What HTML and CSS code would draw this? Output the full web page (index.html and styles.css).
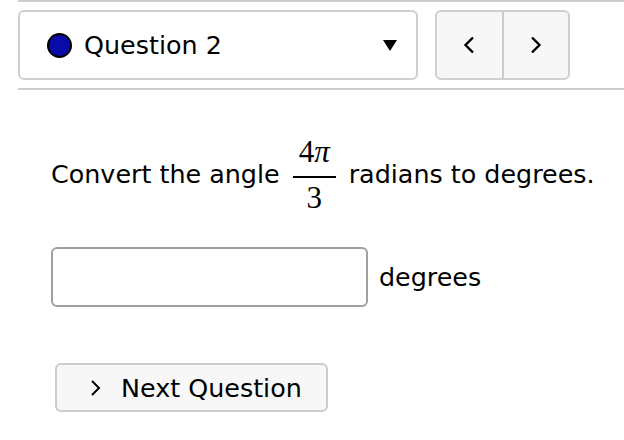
FILE: index.html
```html
<!DOCTYPE html>
<html>
<head>
    <title>Question 2</title>
    <link rel="stylesheet" href="styles.css">
</head>
<body>
    <div class="toolbar">
        <div class="picker">
            <span class="dot"></span>
            <span class="picker-label">Question 2</span>
            <span class="caret"></span>
        </div>
        <div class="nav">
            <button class="nav-btn" aria-label="Previous">
                <svg width="12" height="18" viewBox="0 0 12 18"><path d="M10 1.5 L2.5 9 L10 16.5" fill="none" stroke="#000" stroke-width="2.4"/></svg>
            </button>
            <button class="nav-btn nav-next" aria-label="Next">
                <svg width="12" height="18" viewBox="0 0 12 18"><path d="M2 1.5 L9.5 9 L2 16.5" fill="none" stroke="#000" stroke-width="2.4"/></svg>
            </button>
        </div>
    </div>

    <div class="problem">
        <div class="prompt">
            <span>Convert the angle</span>
            <span class="frac">
                <span class="num">4<i>π</i></span>
                <span class="bar"></span>
                <span class="den">3</span>
            </span>
            <span>radians to degrees.</span>
        </div>

        <div class="answer">
            <input type="text" class="answer-box">
            <span class="unit">degrees</span>
        </div>

        <button class="next-btn">
            <svg width="11" height="18" viewBox="0 0 11 18"><path d="M2 2 L9 9 L2 16" fill="none" stroke="#000" stroke-width="2"/></svg>
            Next Question
        </button>
    </div>
</body>
</html>
```

FILE: styles.css
```css
body {
    margin: 0;
    font-family: "DejaVu Sans", Verdana, sans-serif;
    color: #000;
    background: #fff;
}
.toolbar {
    display: flex;
    gap: 17px;
    margin-left: 18px;
    padding: 8px 0;
    border-top: 2px solid #ccc;
    border-bottom: 2px solid #ccc;
}
.picker {
    display: flex;
    align-items: center;
    width: 400px;
    height: 70px;
    box-sizing: border-box;
    padding: 0 19px 0 27px;
    border: 2px solid #d0d0d0;
    border-radius: 6px;
    background: #fff;
}
.dot {
    width: 21px;
    height: 21px;
    border-radius: 50%;
    background: #0a0aa8;
    border: 2px solid #000;
}
.picker-label {
    margin-left: 12px;
    font-size: 25.4px;
}
.caret {
    margin-left: auto;
    width: 0;
    height: 0;
    border-left: 7px solid transparent;
    border-right: 7px solid transparent;
    border-top: 11px solid #000;
}
.nav {
    display: flex;
    width: 135px;
    height: 70px;
    box-sizing: border-box;
    border: 2px solid #d0d0d0;
    border-radius: 6px;
    background: #f7f7f7;
    overflow: hidden;
}
.nav-btn {
    flex: 1;
    display: flex;
    align-items: center;
    justify-content: center;
    border: none;
    background: transparent;
    padding: 0;
}
.nav-next {
    border-left: 2px solid #ccc;
}
.problem {
    margin-left: 51px;
}
.prompt {
    display: flex;
    align-items: center;
    gap: 13px;
    margin-top: 41px;
    font-size: 25.4px;
}
.frac {
    display: flex;
    flex-direction: column;
    align-items: center;
    font-family: "Liberation Serif", "DejaVu Serif", serif;
    font-size: 31px;
    line-height: 30px;
}
.num {
    padding: 6px 3px 9px;
}
.num i {
    font-style: italic;
}
.bar {
    width: 43px;
    height: 2px;
    background: #000;
}
.den {
    padding: 5px 0 4px;
}
.answer {
    display: flex;
    align-items: center;
    gap: 11px;
    margin-top: 30px;
    font-size: 25.4px;
}
.answer-box {
    width: 317px;
    height: 60px;
    box-sizing: border-box;
    border: 2px solid #a0a0a0;
    border-radius: 6px;
    background: #fff;
}
.next-btn {
    display: flex;
    align-items: center;
    gap: 20px;
    width: 273px;
    height: 49px;
    box-sizing: border-box;
    margin: 56px 0 0 4px;
    padding: 0 0 0 33px;
    border: 2px solid #ccc;
    border-radius: 6px;
    background: #f7f7f7;
    font-family: inherit;
    font-size: 25.4px;
    color: #000;
}
```
